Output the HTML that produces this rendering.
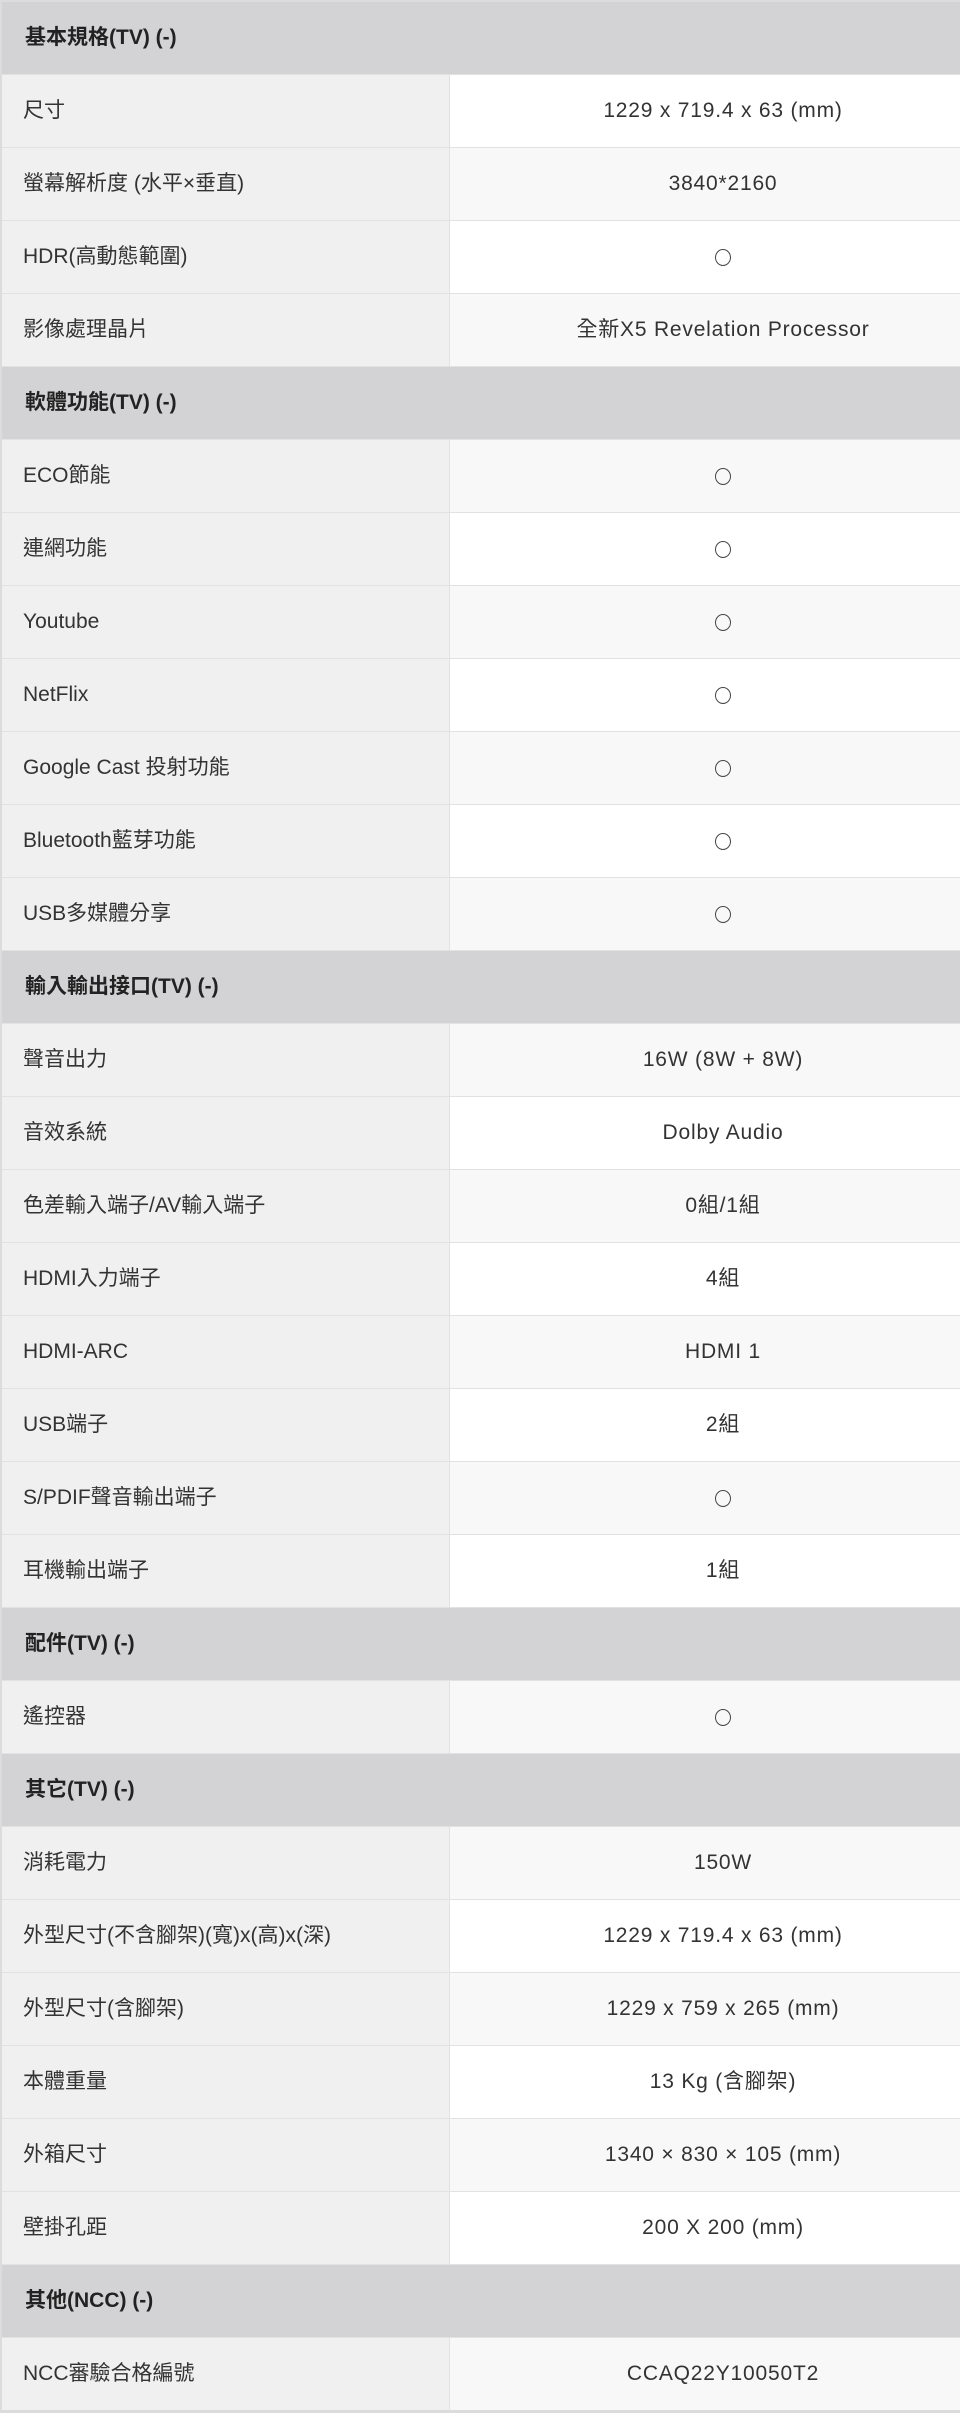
<!DOCTYPE html>
<html><head><meta charset="utf-8"><style>
*{margin:0;padding:0;box-sizing:border-box}
body{width:960px;height:2422px;background:#fff;font-family:"Liberation Sans","Noto Sans CJK TC",sans-serif;color:#333;font-size:21px;line-height:24px}
.t{position:absolute;left:0;top:0;width:960px;border:2px solid #dcdcdc;border-right:none;border-bottom:3px solid #dcdcdc}
.r{display:flex;height:73px;border-bottom:1px solid #e2e2e2;align-items:stretch}
.r:last-child{border-bottom:none;height:72px}
.h{background:#d3d3d5;font-weight:bold;color:#222;align-items:center;padding-left:23px}
.l{width:448px;background:#f0f0f0;border-right:1px solid #e2e2e2;display:flex;align-items:center;padding-left:21px}
.v{flex:1;display:flex;align-items:center;justify-content:center;background:#fff;letter-spacing:0.8px;padding-left:36px}
.r.a .v{background:#f8f8f8}
.o{display:inline-block;width:16px;height:17px;border:1.6px solid #444;border-radius:50%}
</style></head><body><div class="t">
<div class="r h">基本規格(TV) (-)</div>
<div class="r"><div class="l">尺寸</div><div class="v">1229 x 719.4 x 63 (mm)</div></div>
<div class="r a"><div class="l">螢幕解析度 (水平×垂直)</div><div class="v">3840*2160</div></div>
<div class="r"><div class="l">HDR(高動態範圍)</div><div class="v"><span class="o"></span></div></div>
<div class="r a"><div class="l">影像處理晶片</div><div class="v">全新X5 Revelation Processor</div></div>
<div class="r h">軟體功能(TV) (-)</div>
<div class="r a"><div class="l">ECO節能</div><div class="v"><span class="o"></span></div></div>
<div class="r"><div class="l">連網功能</div><div class="v"><span class="o"></span></div></div>
<div class="r a"><div class="l">Youtube</div><div class="v"><span class="o"></span></div></div>
<div class="r"><div class="l">NetFlix</div><div class="v"><span class="o"></span></div></div>
<div class="r a"><div class="l">Google Cast 投射功能</div><div class="v"><span class="o"></span></div></div>
<div class="r"><div class="l">Bluetooth藍芽功能</div><div class="v"><span class="o"></span></div></div>
<div class="r a"><div class="l">USB多媒體分享</div><div class="v"><span class="o"></span></div></div>
<div class="r h">輸入輸出接口(TV) (-)</div>
<div class="r a"><div class="l">聲音出力</div><div class="v">16W (8W + 8W)</div></div>
<div class="r"><div class="l">音效系統</div><div class="v">Dolby Audio</div></div>
<div class="r a"><div class="l">色差輸入端子/AV輸入端子</div><div class="v">0組/1組</div></div>
<div class="r"><div class="l">HDMI入力端子</div><div class="v">4組</div></div>
<div class="r a"><div class="l">HDMI-ARC</div><div class="v">HDMI 1</div></div>
<div class="r"><div class="l">USB端子</div><div class="v">2組</div></div>
<div class="r a"><div class="l">S/PDIF聲音輸出端子</div><div class="v"><span class="o"></span></div></div>
<div class="r"><div class="l">耳機輸出端子</div><div class="v">1組</div></div>
<div class="r h">配件(TV) (-)</div>
<div class="r a"><div class="l">遙控器</div><div class="v"><span class="o"></span></div></div>
<div class="r h">其它(TV) (-)</div>
<div class="r a"><div class="l">消耗電力</div><div class="v">150W</div></div>
<div class="r"><div class="l">外型尺寸(不含腳架)(寬)x(高)x(深)</div><div class="v">1229 x 719.4 x 63 (mm)</div></div>
<div class="r a"><div class="l">外型尺寸(含腳架)</div><div class="v">1229 x 759 x 265 (mm)</div></div>
<div class="r"><div class="l">本體重量</div><div class="v">13 Kg (含腳架)</div></div>
<div class="r a"><div class="l">外箱尺寸</div><div class="v">1340 × 830 × 105 (mm)</div></div>
<div class="r"><div class="l">壁掛孔距</div><div class="v">200 X 200 (mm)</div></div>
<div class="r h">其他(NCC) (-)</div>
<div class="r a"><div class="l">NCC審驗合格編號</div><div class="v">CCAQ22Y10050T2</div></div>
</div></body></html>
